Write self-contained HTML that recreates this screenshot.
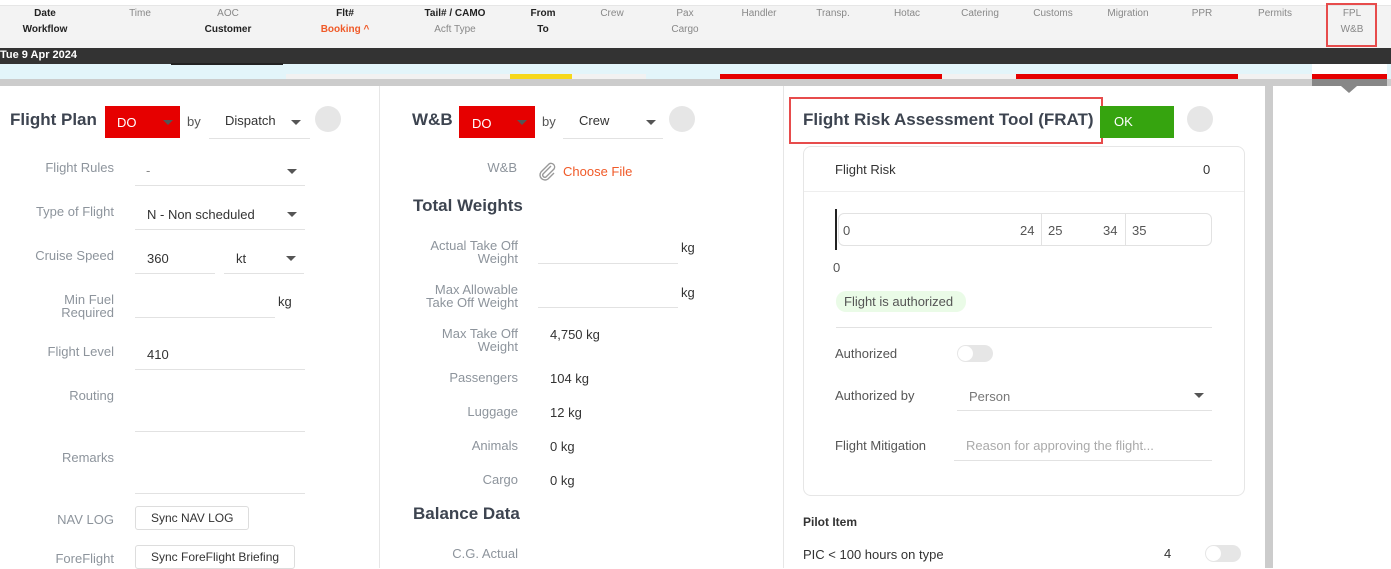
<!DOCTYPE html>
<html><head><meta charset="utf-8"><style>
*{box-sizing:border-box;margin:0;padding:0}
body{width:1391px;height:568px;overflow:hidden;background:#fff;font-family:"Liberation Sans",sans-serif;font-size:13px;color:#333;position:relative}
.a{position:absolute;white-space:nowrap}
.h{font-size:10px;color:#888;text-align:center}
.hb{font-weight:bold;color:#222}
.lbl{color:#8d949c;text-align:right;font-size:13px;line-height:13px}
.ul{position:absolute;border-bottom:1px solid #e2e2e2}
.car{position:absolute;width:0;height:0;border-left:5px solid transparent;border-right:5px solid transparent;border-top:5px solid #555}
.circ{position:absolute;width:26px;height:26px;border-radius:50%;background:#e6e6e6}
.title{font-weight:bold;font-size:17px;color:#3d4450}
.red{position:absolute;background:#e60000;color:#fff;height:32px}
.btn{position:absolute;border:1px solid #ddd;border-radius:3px;height:24px;font-size:12px;padding:4px 15px;color:#333}
.tog{position:absolute;width:36px;height:17px;border-radius:9px;background:#e6e6e6}
.tog::after{content:"";position:absolute;left:1px;top:1px;width:15px;height:15px;border-radius:50%;background:#fff}
</style></head><body>
<div class="a" style="left:0;top:5px;width:1391px;height:43px;background:#f3f3f3;border-top:1px solid #e6e6e6"></div>
<div class="a h hb" style="left:20px;top:8px;width:50px">Date</div>
<div class="a h hb" style="left:15px;top:24px;width:60px">Workflow</div>
<div class="a h" style="left:120px;top:8px;width:40px">Time</div>
<div class="a h" style="left:198px;top:8px;width:60px">AOC</div>
<div class="a h hb" style="left:193px;top:24px;width:70px">Customer</div>
<div class="a h hb" style="left:320px;top:8px;width:50px">Flt#</div>
<div class="a h hb" style="left:305px;top:24px;width:80px;color:#f05a28">Booking ^</div>
<div class="a h hb" style="left:415px;top:8px;width:80px">Tail# / CAMO</div>
<div class="a h" style="left:415px;top:24px;width:80px">Acft Type</div>
<div class="a h hb" style="left:523px;top:8px;width:40px">From</div>
<div class="a h hb" style="left:523px;top:24px;width:40px">To</div>
<div class="a h" style="left:592px;top:8px;width:40px">Crew</div>
<div class="a h" style="left:665px;top:8px;width:40px">Pax</div>
<div class="a h" style="left:665px;top:24px;width:40px">Cargo</div>
<div class="a h" style="left:734px;top:8px;width:50px">Handler</div>
<div class="a h" style="left:808px;top:8px;width:50px">Transp.</div>
<div class="a h" style="left:882px;top:8px;width:50px">Hotac</div>
<div class="a h" style="left:955px;top:8px;width:50px">Catering</div>
<div class="a h" style="left:1028px;top:8px;width:50px">Customs</div>
<div class="a h" style="left:1100px;top:8px;width:56px">Migration</div>
<div class="a h" style="left:1180px;top:8px;width:44px">PPR</div>
<div class="a h" style="left:1250px;top:8px;width:50px">Permits</div>
<div class="a" style="left:1326px;top:3px;width:51px;height:44px;border:2px solid #e74c4c"></div>
<div class="a h" style="left:1330px;top:8px;width:44px">FPL</div>
<div class="a h" style="left:1330px;top:24px;width:44px">W&amp;B</div>
<div class="a" style="left:0;top:48px;width:1391px;height:16px;background:#333"></div>
<div class="a" style="left:0;top:49px;color:#fff;font-weight:bold;font-size:11px">Tue 9 Apr 2024</div>
<div class="a" style="left:0;top:64px;width:1391px;height:15px;background:#e3f5fa"></div>
<div class="a" style="left:171px;top:63px;width:112px;height:2px;background:#222"></div>
<div class="a" style="left:286px;top:74px;width:360px;height:5px;background:#f2f2f2"></div>
<div class="a" style="left:510px;top:74px;width:62px;height:5px;background:#f7d81c"></div>
<div class="a" style="left:720px;top:74px;width:222px;height:5px;background:#e60000"></div>
<div class="a" style="left:942px;top:74px;width:74px;height:5px;background:#f2f2f2"></div>
<div class="a" style="left:1016px;top:74px;width:222px;height:5px;background:#e60000"></div>
<div class="a" style="left:1238px;top:74px;width:74px;height:5px;background:#f2f2f2"></div>
<div class="a" style="left:1312px;top:64px;width:75px;height:10px;background:#fff"></div>
<div class="a" style="left:1312px;top:74px;width:75px;height:5px;background:#e60000"></div>
<div class="a" style="left:0;top:79px;width:1391px;height:7px;background:#ccc"></div>
<div class="a" style="left:1312px;top:79px;width:75px;height:7px;background:#878787"></div>
<div class="a" style="left:1341px;top:86px;width:0;height:0;border-left:8px solid transparent;border-right:8px solid transparent;border-top:7px solid #878787"></div>
<div class="a" style="left:379px;top:86px;width:1px;height:482px;background:#e6e6e6"></div>
<div class="a" style="left:783px;top:86px;width:1px;height:482px;background:#e6e6e6"></div>
<div class="a" style="left:1265px;top:86px;width:8px;height:482px;background:#ccc"></div>

<!-- Flight plan -->
<div class="a title" style="left:10px;top:110px">Flight Plan</div>
<div class="red" style="left:105px;top:106px;width:75px"><span class="a" style="left:12px;top:9px">DO</span></div>
<div class="car" style="left:163px;top:120px;border-top-color:#555"></div>
<div class="a" style="left:187px;top:114px;color:#555">by</div>
<div class="a" style="left:225px;top:113px">Dispatch</div>
<div class="car" style="left:291px;top:120px"></div>
<div class="ul" style="left:209px;top:138px;width:101px"></div>
<div class="circ" style="left:315px;top:106px"></div>

<div class="a lbl" style="left:0;top:161px;width:114px">Flight Rules</div>
<div class="a" style="left:146px;top:163px;color:#888">-</div><div class="car" style="left:287px;top:169px"></div><div class="ul" style="left:135px;top:185px;width:170px"></div>
<div class="a lbl" style="left:0;top:205px;width:114px">Type of Flight</div>
<div class="a" style="left:147px;top:207px">N - Non scheduled</div><div class="car" style="left:287px;top:212px"></div><div class="ul" style="left:135px;top:229px;width:170px"></div>
<div class="a lbl" style="left:0;top:249px;width:114px">Cruise Speed</div>
<div class="a" style="left:147px;top:251px">360</div><div class="ul" style="left:135px;top:273px;width:80px"></div>
<div class="a" style="left:236px;top:251px">kt</div><div class="car" style="left:286px;top:256px"></div><div class="ul" style="left:224px;top:273px;width:80px"></div>
<div class="a lbl" style="left:0;top:293px;width:114px">Min Fuel<br>Required</div>
<div class="a" style="left:278px;top:294px">kg</div><div class="ul" style="left:135px;top:317px;width:140px"></div>
<div class="a lbl" style="left:0;top:345px;width:114px">Flight Level</div>
<div class="a" style="left:147px;top:347px">410</div><div class="ul" style="left:135px;top:369px;width:170px"></div>
<div class="a lbl" style="left:0;top:389px;width:114px">Routing</div><div class="ul" style="left:135px;top:431px;width:170px"></div>
<div class="a lbl" style="left:0;top:451px;width:114px">Remarks</div><div class="ul" style="left:135px;top:493px;width:170px"></div>
<div class="a lbl" style="left:0;top:513px;width:114px">NAV LOG</div>
<div class="btn" style="left:135px;top:506px">Sync NAV LOG</div>
<div class="a lbl" style="left:0;top:552px;width:114px">ForeFlight</div>
<div class="btn" style="left:135px;top:545px">Sync ForeFlight Briefing</div>

<!-- W&B -->
<div class="a title" style="left:412px;top:110px">W&amp;B</div>
<div class="red" style="left:459px;top:106px;width:76px"><span class="a" style="left:13px;top:10px">DO</span></div>
<div class="car" style="left:517px;top:120px"></div>
<div class="a" style="left:542px;top:114px;color:#555">by</div>
<div class="a" style="left:579px;top:113px">Crew</div><div class="car" style="left:646px;top:120px"></div>
<div class="ul" style="left:563px;top:138px;width:100px"></div>
<div class="circ" style="left:669px;top:106px"></div>
<div class="a lbl" style="left:400px;top:161px;width:117px">W&amp;B</div>
<svg class="a" style="left:537px;top:161px" width="20" height="20" viewBox="0 0 20 20"><path d="M14 5 L6 13 a2.2 2.2 0 0 0 3 3 L17 8 a3.6 3.6 0 0 0 -5 -5 L4 11 a5 5 0 0 0 7 7 L17 12" fill="none" stroke="#999" stroke-width="1.4"/></svg>
<div class="a" style="left:563px;top:164px;color:#f05a28">Choose File</div>
<div class="a title" style="left:413px;top:196px">Total Weights</div>
<div class="a lbl" style="left:400px;top:239px;width:118px">Actual Take Off<br>Weight</div>
<div class="a" style="left:681px;top:240px">kg</div><div class="ul" style="left:538px;top:263px;width:140px"></div>
<div class="a lbl" style="left:400px;top:283px;width:118px">Max Allowable<br>Take Off Weight</div>
<div class="a" style="left:681px;top:285px">kg</div><div class="ul" style="left:538px;top:307px;width:140px"></div>
<div class="a lbl" style="left:400px;top:327px;width:118px">Max Take Off<br>Weight</div>
<div class="a" style="left:550px;top:327px">4,750 kg</div>
<div class="a lbl" style="left:400px;top:371px;width:118px">Passengers</div><div class="a" style="left:550px;top:371px">104 kg</div>
<div class="a lbl" style="left:400px;top:405px;width:118px">Luggage</div><div class="a" style="left:550px;top:405px">12 kg</div>
<div class="a lbl" style="left:400px;top:439px;width:118px">Animals</div><div class="a" style="left:550px;top:439px">0 kg</div>
<div class="a lbl" style="left:400px;top:473px;width:118px">Cargo</div><div class="a" style="left:550px;top:473px">0 kg</div>
<div class="a title" style="left:413px;top:504px">Balance Data</div>
<div class="a lbl" style="left:400px;top:547px;width:118px">C.G. Actual</div>

<!-- FRAT -->
<div class="a" style="left:789px;top:97px;width:314px;height:47px;border:2px solid #e74c4c"></div>
<div class="a title" style="left:803px;top:110px">Flight Risk Assessment Tool (FRAT)</div>
<div class="a" style="left:1100px;top:106px;width:74px;height:32px;background:#36a40f;color:#fff"><span class="a" style="left:14px;top:8px">OK</span></div>
<div class="circ" style="left:1187px;top:106px"></div>
<div class="a" style="left:803px;top:146px;width:442px;height:350px;border:1px solid #e6e6e6;border-radius:8px"></div>
<div class="a" style="left:804px;top:191px;width:440px;height:1px;background:#eee"></div>
<div class="a" style="left:835px;top:162px">Flight Risk</div>
<div class="a" style="left:1203px;top:162px">0</div>
<div class="a" style="left:838px;top:213px;width:374px;height:33px;border:1px solid #e2e2e2;border-radius:6px"></div>
<div class="a" style="left:1041px;top:213px;width:1px;height:33px;background:#e2e2e2"></div>
<div class="a" style="left:1125px;top:213px;width:1px;height:33px;background:#e2e2e2"></div>
<div class="a" style="left:835px;top:209px;width:2px;height:41px;background:#222"></div>
<div class="a" style="left:843px;top:223px;color:#555">0</div>
<div class="a" style="left:1020px;top:223px;color:#555">24</div>
<div class="a" style="left:1048px;top:223px;color:#555">25</div>
<div class="a" style="left:1103px;top:223px;color:#555">34</div>
<div class="a" style="left:1132px;top:223px;color:#555">35</div>
<div class="a" style="left:833px;top:260px;color:#555">0</div>
<div class="a" style="left:836px;top:291px;height:21px;width:130px;background:#eafbe7;border-radius:10px;color:#555;padding:3px 8px">Flight is authorized</div>
<div class="a" style="left:836px;top:327px;width:376px;height:1px;background:#e2e2e2"></div>
<div class="a" style="left:835px;top:346px;color:#555">Authorized</div>
<div class="tog" style="left:957px;top:345px"></div>
<div class="a" style="left:835px;top:388px;color:#555">Authorized by</div>
<div class="a" style="left:969px;top:389px;color:#777">Person</div><div class="car" style="left:1194px;top:393px"></div>
<div class="ul" style="left:957px;top:410px;width:255px"></div>
<div class="a" style="left:835px;top:438px;color:#555">Flight Mitigation</div>
<div class="a" style="left:966px;top:438px;color:#aaa">Reason for approving the flight...</div>
<div class="ul" style="left:954px;top:460px;width:258px"></div>
<div class="a" style="left:803px;top:515px;font-weight:bold;font-size:12px">Pilot Item</div>
<div class="a" style="left:803px;top:547px">PIC &lt; 100 hours on type</div>
<div class="a" style="left:1164px;top:546px">4</div>
<div class="tog" style="left:1205px;top:545px"></div>
</body></html>
